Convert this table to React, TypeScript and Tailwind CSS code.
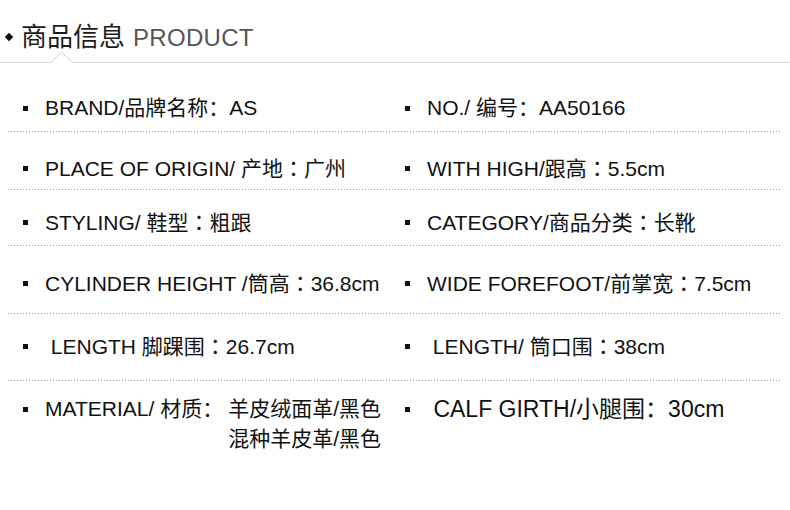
import React from "react";

type Cell = {
  label: string;
  colon?: "left" | "mid";
  value?: string;
  big?: boolean;
};

type Row = { h: number; pt: number; left: Cell; right: Cell };

const rows: Row[] = [
  {
    h: 69,
    pt: 33,
    left: { label: "BRAND/品牌名称", colon: "left", value: "AS" },
    right: { label: "NO./ 编号", colon: "left", value: "AA50166" },
  },
  {
    h: 58,
    pt: 24,
    left: { label: "PLACE OF ORIGIN/ 产地", colon: "mid", value: "广州" },
    right: { label: "WITH HIGH/跟高", colon: "mid", value: "5.5cm" },
  },
  {
    h: 56,
    pt: 20,
    left: { label: "STYLING/ 鞋型", colon: "mid", value: "粗跟" },
    right: { label: "CATEGORY/商品分类", colon: "mid", value: "长靴" },
  },
  {
    h: 68,
    pt: 25,
    left: { label: "CYLINDER HEIGHT /筒高", colon: "mid", value: "36.8cm" },
    right: { label: "WIDE FOREFOOT/前掌宽", colon: "mid", value: "7.5cm" },
  },
  {
    h: 67,
    pt: 20,
    left: { label: "\u00a0LENGTH 脚踝围", colon: "mid", value: "26.7cm" },
    right: { label: "\u00a0LENGTH/ 筒口围", colon: "mid", value: "38cm" },
  },
];

const font = "font-['Liberation_Sans','Noto_Sans_CJK_SC',sans-serif]";

const Bullet = () => <div className="block w-[5px] h-[5px] min-w-[5px] bg-[#111]" />;

const Colon = ({ kind }: { kind?: "left" | "mid" }) =>
  kind === "mid" ? (
    <span className="font-['Noto_Sans_CJK_TC',sans-serif]">：</span>
  ) : (
    <span>：</span>
  );

const Item = ({ cell }: { cell: Cell }) => (
  <div className="flex items-center gap-[17px] h-[24px]">
    <Bullet />
    <span
      className={`whitespace-pre ${cell.big ? "text-[23px]" : "text-[21px]"} leading-[24px]`}
    >
      {cell.label}
      {cell.colon && <Colon kind={cell.colon} />}
      {cell.value}
    </span>
  </div>
);

const Dots = () => (
  <div className="mx-[8px] h-px bg-[linear-gradient(to_right,#9a9a9a_1px,transparent_1px)] bg-[length:3px_1px] bg-repeat-x" />
);

export default function App() {
  return (
    <div className={`w-[790px] h-[510px] bg-white text-[#111] ${font} overflow-hidden`}>
      <div className="relative h-[63px] border-b border-[#d6d6d6] flex items-start pt-[21px]">
        <div className="ml-[6px] mt-[13px] w-[6px] h-[6px] min-w-[6px] bg-[#111] rotate-45" />
        <span className="ml-[9px] text-[26px] leading-[32px] text-[#1c1c1c]">商品信息</span>
        <span className="ml-[8px] mt-[1px] text-[24px] leading-[32px] text-[#555] tracking-[0.3px] font-['Liberation_Sans',sans-serif]">
          PRODUCT
        </span>
        <svg
          className="absolute left-[50px] top-[51px]"
          width="23"
          height="12"
          viewBox="0 0 23 12"
        >
          <polygon points="0,12 11.5,1 23,12" fill="#fff" />
          <polyline points="0.5,11.5 11.5,1 22.5,11.5" fill="none" stroke="#cfcfcf" strokeWidth="1" />
        </svg>
      </div>

      {rows.map((r, i) => (
        <div key={i}>
          <div className="grid grid-cols-[382px_1fr]" style={{ height: r.h - 1, paddingTop: r.pt }}>
            <div className="pl-[23px]">
              <Item cell={r.left} />
            </div>
            <div className="pl-[23px]">
              <Item cell={r.right} />
            </div>
          </div>
          <Dots />
        </div>
      ))}

      <div className="grid grid-cols-[382px_1fr] pt-[13px]">
        <div className="pl-[23px] flex items-start">
          <div className="flex items-center gap-[17px] h-[30px]">
            <Bullet />
            <span className="whitespace-pre text-[21px] leading-[30px]">
              MATERIAL/ 材质：
            </span>
          </div>
          <div className="ml-[5px] text-[21px] leading-[30px]">
            <div>羊皮绒面革/黑色</div>
            <div>混种羊皮革/黑色</div>
          </div>
        </div>
        <div className="pl-[23px] pt-[3px]">
          <Item cell={{ label: "\u00a0CALF GIRTH/小腿围", colon: "left", value: "30cm", big: true }} />
        </div>
      </div>
    </div>
  );
}
